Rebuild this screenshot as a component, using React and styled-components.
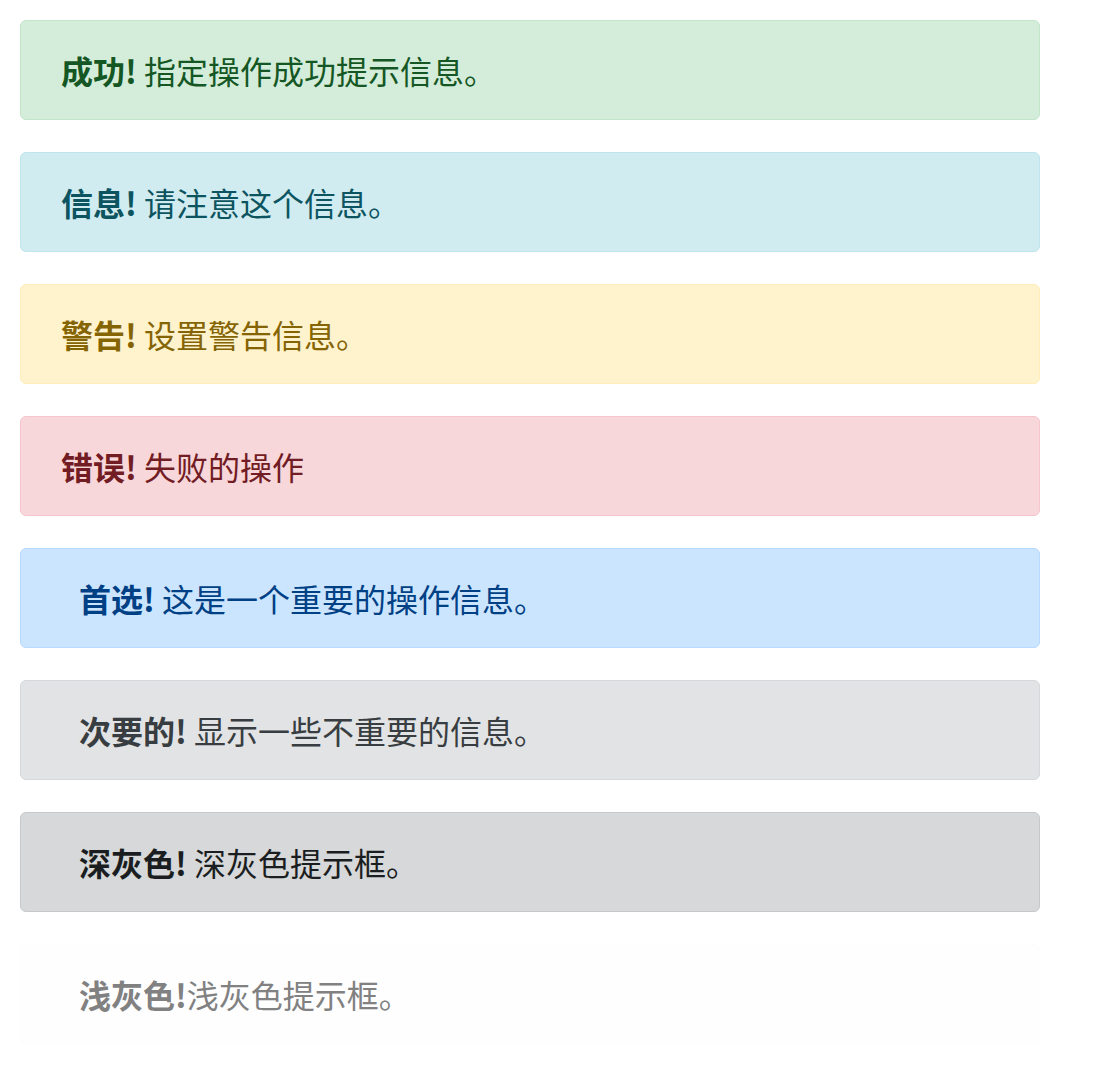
import React from 'react';
import styled, { createGlobalStyle } from 'styled-components';

const GlobalStyle = createGlobalStyle`
  html, body {
    margin: 0;
    padding: 0;
    background: #ffffff;
  }
  body {
    font-family: "Noto Sans CJK SC", "Noto Sans", sans-serif;
  }
`;

const variants = {
  success: { bg: '#d4edda', border: '#c3e6cb', color: '#155724' },
  info: { bg: '#d1ecf1', border: '#bee5eb', color: '#0c5460' },
  warning: { bg: '#fff3cd', border: '#ffeeba', color: '#856404' },
  danger: { bg: '#f8d7da', border: '#f5c6cb', color: '#721c24' },
  primary: { bg: '#cce5ff', border: '#b8daff', color: '#004085' },
  secondary: { bg: '#e2e3e5', border: '#d6d8db', color: '#383d41' },
  dark: { bg: '#d6d8d9', border: '#c6c8ca', color: '#1b1e21' },
  light: { bg: '#fefefe', border: '#fdfdfe', color: '#818182' },
};

const Page = styled.div`
  padding: 20px;
  display: flex;
  flex-direction: column;
  gap: 32px;
`;

const Alert = styled.div`
  box-sizing: border-box;
  width: 1020px;
  height: 100px;
  padding: 0 40px 0 ${({ $indent }) => ($indent ? '58px' : '40px')};
  display: flex;
  align-items: center;
  border: 1px solid ${({ $kind }) => variants[$kind].border};
  border-radius: 6px;
  background: ${({ $kind }) => variants[$kind].bg};
  color: ${({ $kind }) => variants[$kind].color};
  font-size: 32px;
  line-height: 50px;
  white-space: pre;
`;

const Strong = styled.strong`
  font-weight: 700;
`;

const alerts = [
  { kind: 'success', title: '成功!', text: ' 指定操作成功提示信息。' },
  { kind: 'info', title: '信息!', text: ' 请注意这个信息。' },
  { kind: 'warning', title: '警告!', text: ' 设置警告信息。' },
  { kind: 'danger', title: '错误!', text: ' 失败的操作' },
  { kind: 'primary', title: '首选!', text: ' 这是一个重要的操作信息。', indent: true },
  { kind: 'secondary', title: '次要的!', text: ' 显示一些不重要的信息。', indent: true },
  { kind: 'dark', title: '深灰色!', text: ' 深灰色提示框。', indent: true },
  { kind: 'light', title: '浅灰色!', text: '浅灰色提示框。', indent: true },
];

export default function App() {
  return (
    <>
      <GlobalStyle />
      <Page>
        {alerts.map((a) => (
          <Alert key={a.kind} $kind={a.kind} $indent={a.indent}>
            <Strong>{a.title}</Strong>
            {a.text}
          </Alert>
        ))}
      </Page>
    </>
  );
}
